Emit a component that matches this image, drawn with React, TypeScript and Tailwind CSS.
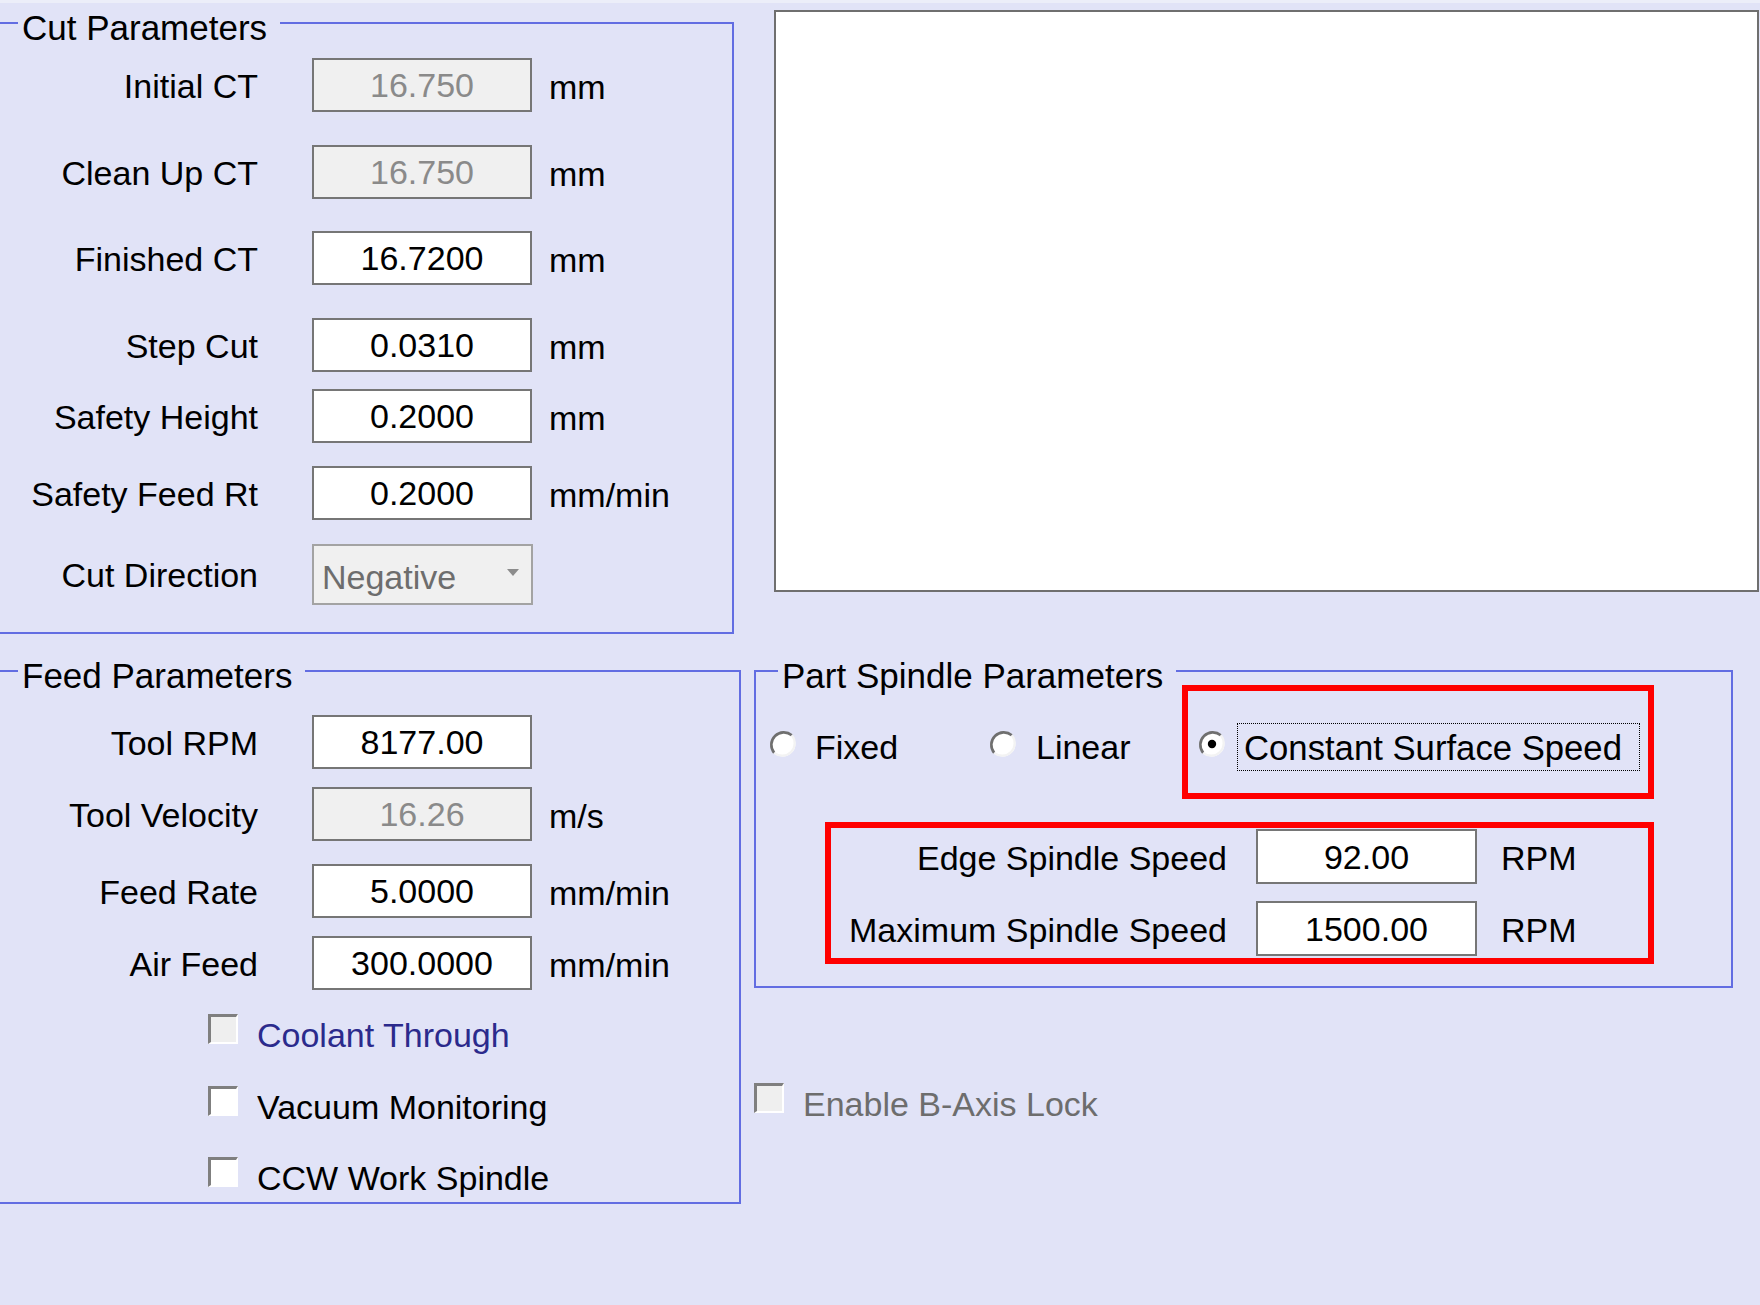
import React from "react";

const BG = "bg-[#e1e3f7]";

function GroupBox({
  title,
  className,
  titleClassName,
  children,
}: {
  title: string;
  className?: string;
  titleClassName?: string;
  children?: React.ReactNode;
}) {
  return (
    <div className={`relative shrink-0 border-2 border-[#626de2] ${className ?? ""}`}>
      {/* legend sits over the top border line */}
      <span
        className={`absolute top-[-13px] ${BG} pl-[4px] pr-[13px] text-[35px] leading-[34px] text-black ${titleClassName ?? "left-[18px]"}`}
      >
        {title}
      </span>
      {children}
    </div>
  );
}

function Field({
  label,
  value,
  unit,
  disabled,
  className,
}: {
  label: string;
  value: string;
  unit?: string;
  disabled?: boolean;
  className?: string;
}) {
  return (
    <div className={`flex h-[54px] items-center ${className ?? ""}`}>
      <span className="mt-[2px] w-[258px] text-right">{label}</span>
      <div
        className={`ml-[54px] flex h-full w-[220px] items-center justify-center border-2 border-[#767676] ${
          disabled ? "bg-[#f0f0f0] text-[#8a8a8a]" : "bg-white text-black"
        }`}
      >
        {value}
      </div>
      {unit && <span className="ml-[17px] mt-[3px]">{unit}</span>}
    </div>
  );
}

function CheckBox({
  label,
  className,
  boxFill = "bg-white",
  textColor = "text-black",
}: {
  label: string;
  className?: string;
  boxFill?: string;
  textColor?: string;
}) {
  return (
    <div className={`flex h-[30px] items-center ${className ?? ""}`}>
      <span
        className={`h-[30px] w-[30px] shrink-0 border-t-[3px] border-l-[3px] border-r-2 border-b-2 border-t-[#7f7f7f] border-l-[#7f7f7f] border-r-white border-b-white ${boxFill}`}
      />
      <span className={`ml-[19px] mt-[11px] ${textColor}`}>{label}</span>
    </div>
  );
}

function Radio({ checked }: { checked?: boolean }) {
  return (
    <svg width="28" height="28" viewBox="0 0 28 28" className="mt-[4px] shrink-0">
      <circle cx="14" cy="14" r="12.5" fill="#ffffff" />
      <path d="M5.2 22.8 A12.5 12.5 0 0 1 22.8 5.2" fill="none" stroke="#6f6f6f" strokeWidth="2.6" />
      <path d="M22.8 5.2 A12.5 12.5 0 0 1 5.2 22.8" fill="none" stroke="#f3f3f3" strokeWidth="2.2" />
      {checked && <circle cx="14" cy="14" r="4.2" fill="#000000" />}
    </svg>
  );
}

function SpeedRow({ label, value, className }: { label: string; value: string; className?: string }) {
  return (
    <div className={`flex h-[55px] items-center ${className ?? ""}`}>
      <span className="mt-[3px] w-[396px] text-right">{label}</span>
      <div className="ml-[29px] flex h-full w-[221px] items-center justify-center border-2 border-[#767676] bg-white">
        {value}
      </div>
      <span className="ml-[24px] mt-[3px]">RPM</span>
    </div>
  );
}

export default function App() {
  return (
    <div
      className={`flex h-[1305px] w-[1760px] overflow-hidden ${BG} shadow-[inset_0_3px_0_#eceef9] font-['Liberation_Sans',Arial,sans-serif] text-[34px] leading-none text-black`}
    >
      {/* left column */}
      <div className="flex w-[741px] shrink-0 flex-col">
        <GroupBox title="Cut Parameters" className="-ml-[2px] mt-[22px] h-[612px] w-[736px]">
          <Field className="mt-[34px]" label="Initial CT" value="16.750" unit="mm" disabled />
          <Field className="mt-[33px]" label="Clean Up CT" value="16.750" unit="mm" disabled />
          <Field className="mt-[32px]" label="Finished CT" value="16.7200" unit="mm" />
          <Field className="mt-[33px]" label="Step Cut" value="0.0310" unit="mm" />
          <Field className="mt-[17px]" label="Safety Height" value="0.2000" unit="mm" />
          <Field className="mt-[23px]" label="Safety Feed Rt" value="0.2000" unit="mm/min" />
          <div className="mt-[24px] flex h-[61px] items-center">
            <span className="w-[258px] text-right">Cut Direction</span>
            <div className="ml-[54px] flex h-full w-[221px] items-center border-2 border-[#a3a3a3] bg-[#f0f0f0] pl-[8px] text-[#6d6d6d]">
              <span className="mt-[4px]">Negative</span>
              <svg width="12" height="7" viewBox="0 0 12 7" className="ml-auto mr-[12px] mt-[-4px]">
                <path d="M0 0 H12 L6 7 Z" fill="#8c8c8c" />
              </svg>
            </div>
          </div>
        </GroupBox>

        <GroupBox title="Feed Parameters" className="-ml-[2px] mt-[36px] h-[534px] w-[743px]">
          <Field className="mt-[43px]" label="Tool RPM" value="8177.00" />
          <Field className="mt-[18px]" label="Tool Velocity" value="16.26" unit="m/s" disabled />
          <Field className="mt-[23px]" label="Feed Rate" value="5.0000" unit="mm/min" />
          <Field className="mt-[18px]" label="Air Feed" value="300.0000" unit="mm/min" />
          <CheckBox
            className="ml-[208px] mt-[24px]"
            label="Coolant Through"
            boxFill="bg-[#efefef]"
            textColor="text-[#2b2a8c]"
          />
          <CheckBox className="ml-[208px] mt-[42px]" label="Vacuum Monitoring" />
          <CheckBox className="ml-[208px] mt-[41px]" label="CCW Work Spindle" />
        </GroupBox>
      </div>

      {/* right column */}
      <div className="flex flex-1 flex-col">
        <div className="ml-[33px] mt-[10px] h-[582px] w-[985px] shrink-0 border-2 border-[#6f6f6f] bg-white" />

        <GroupBox
          title="Part Spindle Parameters"
          className="ml-[13px] mt-[78px] h-[318px] w-[979px]"
          titleClassName="left-[22px]"
        >
          <div className="mt-[13px] flex h-[114px] items-center">
            <div className="ml-[13px] flex w-[220px] items-center">
              <Radio />
              <span className="ml-[18px] mt-[10px]">Fixed</span>
            </div>
            <div className="flex w-[193px] items-center">
              <Radio />
              <span className="ml-[19px] mt-[10px]">Linear</span>
            </div>
            <div className="flex h-[114px] w-[472px] items-center border-[6px] border-[#ff0000]">
              <div className="ml-[10px] flex">
                <Radio checked />
              </div>
              <div className="ml-[11px] mt-[10px] flex h-[48px] w-[403px] items-center border border-dotted border-black pl-[6px] pt-[3px] text-[34.7px]">
                Constant Surface Speed
              </div>
            </div>
          </div>

          <div className="ml-[69px] mt-[23px] flex h-[142px] w-[829px] flex-col border-[6px] border-[#ff0000]">
            <SpeedRow className="mt-[1px]" label="Edge Spindle Speed" value="92.00" />
            <SpeedRow className="mt-[17px]" label="Maximum Spindle Speed" value="1500.00" />
          </div>
        </GroupBox>

        <CheckBox
          className="ml-[13px] mt-[95px]"
          label="Enable B-Axis Lock"
          boxFill="bg-[#efefef]"
          textColor="text-[#6d6d6d]"
        />
      </div>
    </div>
  );
}
